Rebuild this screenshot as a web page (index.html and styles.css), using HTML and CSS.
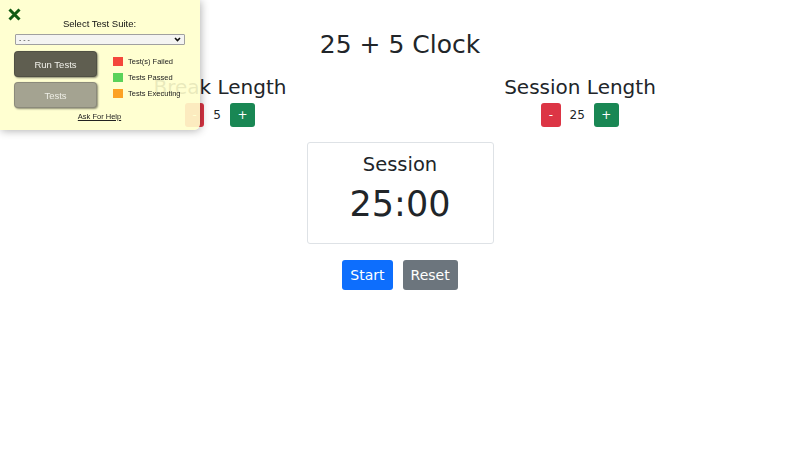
FILE: index.html
```html
<!DOCTYPE html>
<html lang="en">
<head>
    <meta charset="UTF-8">
    <meta name="viewport" content="width=device-width, initial-scale=1.0">
    <title>25 + 5 Clock</title>
    <link rel="stylesheet" href="styles.css">
</head>
<body>
    <div class="app">
        <h1 class="title">25 + 5 Clock</h1>

        <div class="lengths">
            <div class="length">
                <h2 class="length-label" id="break-label">Break Length</h2>
                <div class="length-controls">
                    <button class="btn-sm btn-red" id="break-decrement">-</button>
                    <span class="length-value" id="break-length">5</span>
                    <button class="btn-sm btn-green" id="break-increment">+</button>
                </div>
            </div>
            <div class="length">
                <h2 class="length-label" id="session-label">Session Length</h2>
                <div class="length-controls">
                    <button class="btn-sm btn-red" id="session-decrement">-</button>
                    <span class="length-value" id="session-length">25</span>
                    <button class="btn-sm btn-green" id="session-increment">+</button>
                </div>
            </div>
        </div>

        <div class="timer">
            <div class="timer-label" id="timer-label">Session</div>
            <div class="time-left" id="time-left">25:00</div>
        </div>

        <div class="timer-controls">
            <button class="btn btn-blue" id="start_stop">Start</button>
            <button class="btn btn-gray" id="reset">Reset</button>
        </div>
    </div>

    <!-- test suite panel -->
    <div class="fcc-panel">
        <svg class="fcc-toggle" width="13" height="13" viewBox="0 0 13 13">
            <path d="M1.5 1.5 L11.5 11.5 M11.5 1.5 L1.5 11.5" stroke="#0f5a12" stroke-width="3" fill="none"/>
        </svg>
        <div class="fcc-title">Select Test Suite:</div>
        <div class="fcc-select">
            <select>
                <option>- - -</option>
                <option>25 + 5 Clock</option>
            </select>
            <svg class="fcc-chevron" width="7" height="5" viewBox="0 0 7 5">
                <path d="M1 1 L3.5 3.5 L6 1" stroke="#111" stroke-width="1.6" fill="none"/>
            </svg>
        </div>
        <div class="fcc-row">
            <div class="fcc-buttons">
                <button class="fcc-btn fcc-run">Run Tests</button>
                <button class="fcc-btn fcc-tests">Tests</button>
            </div>
            <div class="fcc-legend">
                <div class="fcc-legend-item"><span class="swatch swatch-failed"></span>Test(s) Failed</div>
                <div class="fcc-legend-item"><span class="swatch swatch-passed"></span>Tests Passed</div>
                <div class="fcc-legend-item"><span class="swatch swatch-running"></span>Tests Executing</div>
            </div>
        </div>
        <a class="fcc-help" href="#">Ask For Help</a>
    </div>
</body>
</html>
```

FILE: styles.css
```css
body {
    margin: 0;
    font-family: 'DejaVu Sans', sans-serif;
    color: #212529;
    background: #fff;
}
.app {
    max-width: 720px;
    margin: 0 auto;
    padding-top: 30px;
    text-align: center;
}
.title {
    margin: 0;
    font-size: 25px;
    font-weight: 400;
    line-height: 1.2;
}
.lengths {
    display: grid;
    grid-template-columns: 1fr 1fr;
    margin-top: 15px;
}
.length-label {
    margin: 0;
    font-size: 20px;
    font-weight: 400;
    line-height: 1.2;
}
.length-controls {
    display: flex;
    justify-content: center;
    align-items: center;
    gap: 9px;
    margin-top: 4px;
}
.length-value {
    font-size: 12px;
}
.btn-sm {
    font-family: inherit;
    font-size: 12px;
    line-height: 24px;
    padding: 0 7.5px;
    border: none;
    border-radius: 3px;
    color: #fff;
}
.btn-red {
    background: #dc3545;
}
.btn-green {
    background: #198754;
}
.timer {
    width: 187px;
    box-sizing: border-box;
    margin: 15px auto 0;
    padding: 10px 0 18px;
    border: 1px solid #dee2e6;
    border-radius: 3px;
}
.timer-label {
    font-size: 19.5px;
    line-height: 1.2;
}
.time-left {
    margin-top: 7px;
    font-size: 35px;
    line-height: 1.2;
}
.timer-controls {
    display: flex;
    justify-content: center;
    gap: 10px;
    margin-top: 16px;
}
.btn {
    font-family: inherit;
    font-size: 14px;
    line-height: 30px;
    padding: 0 8px;
    border: none;
    border-radius: 3px;
    color: #fff;
}
.btn-blue {
    background: #0d6efd;
}
.btn-gray {
    background: #6c757d;
}

/* test suite panel */
.fcc-panel {
    position: fixed;
    top: 0;
    left: 0;
    width: 200px;
    height: 130px;
    box-sizing: border-box;
    padding: 18px 15px 0 14px;
    background: rgba(255, 255, 204, 0.9);
    border-bottom-right-radius: 6px;
    box-shadow: 1px 1px 8px rgba(0, 0, 0, 0.3);
    font-family: 'Liberation Sans', Arial, sans-serif;
    color: #111;
    text-align: center;
}
.fcc-toggle {
    position: absolute;
    top: 8px;
    left: 8px;
}
.fcc-title {
    font-size: 9.5px;
    line-height: 11px;
}
.fcc-select {
    position: relative;
    margin: 4.5px 0 0 1px;
    height: 11.5px;
}
.fcc-select select {
    appearance: none;
    display: block;
    width: 100%;
    height: 11.5px;
    margin: 0;
    padding: 0 3px;
    border: 1px solid #a0a0a0;
    border-radius: 1px;
    background: #f4f4f2;
    font-family: inherit;
    font-size: 7px;
    line-height: 9px;
    color: #333;
}
.fcc-chevron {
    position: absolute;
    right: 4px;
    top: 3.5px;
}
.fcc-row {
    display: flex;
    margin-top: 6px;
}
.fcc-buttons {
    display: flex;
    flex-direction: column;
    gap: 5px;
}
.fcc-btn {
    width: 83px;
    height: 26px;
    border: 1px solid rgba(0, 0, 0, 0.15);
    border-radius: 4px;
    box-shadow: 1px 1px 2px rgba(0, 0, 0, 0.45);
    font-family: inherit;
    font-size: 9.5px;
    padding: 0;
}
.fcc-run {
    background: #5f5e50;
    color: #f1f1ea;
}
.fcc-tests {
    background: #a4a391;
    color: #eeeee6;
}
.fcc-legend {
    margin: 2.5px 0 0 16px;
    text-align: left;
}
.fcc-legend-item {
    display: flex;
    align-items: center;
    height: 16px;
    font-size: 7.5px;
    color: #222;
}
.swatch {
    width: 9.5px;
    height: 9.5px;
    margin-right: 5.5px;
}
.swatch-failed {
    background: #f4473c;
}
.swatch-passed {
    background: #5ad25a;
}
.swatch-running {
    background: #fca225;
}
.fcc-help {
    display: block;
    margin-top: 4px;
    font-size: 7.5px;
    line-height: 10px;
    color: #222;
    text-decoration: underline;
}
```
